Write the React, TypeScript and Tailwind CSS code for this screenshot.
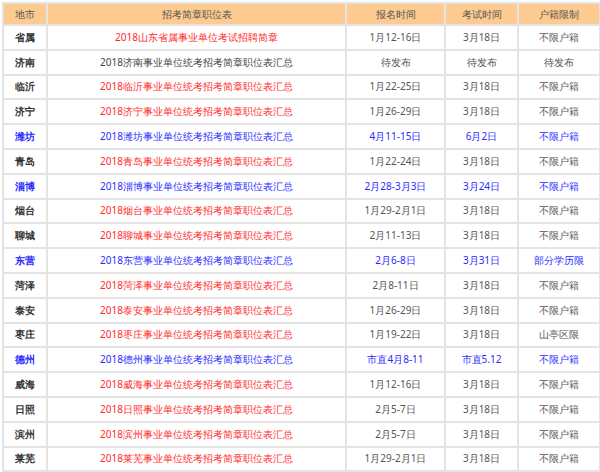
const R = "text-[#ff2a2a]";
const B = "text-[#2a2aff]";

type Row = { city: string; title: string; reg: string; exam: string; hk: string; blue?: boolean };

const rows: Row[] = [
  { city: "省属", title: "2018山东省属事业单位考试招聘简章", reg: "1月12-16日", exam: "3月18日", hk: "不限户籍" },
  { city: "济南", title: "2018济南事业单位统考招考简章职位表汇总", reg: "待发布", exam: "待发布", hk: "待发布" },
  { city: "临沂", title: "2018临沂事业单位统考招考简章职位表汇总", reg: "1月22-25日", exam: "3月18日", hk: "不限户籍" },
  { city: "济宁", title: "2018济宁事业单位统考招考简章职位表汇总", reg: "1月26-29日", exam: "3月18日", hk: "不限户籍" },
  { city: "潍坊", title: "2018潍坊事业单位统考招考简章职位表汇总", reg: "4月11-15日", exam: "6月2日", hk: "不限户籍", blue: true },
  { city: "青岛", title: "2018青岛事业单位统考招考简章职位表汇总", reg: "1月22-24日", exam: "3月18日", hk: "不限户籍" },
  { city: "淄博", title: "2018淄博事业单位统考招考简章职位表汇总", reg: "2月28-3月3日", exam: "3月24日", hk: "不限户籍", blue: true },
  { city: "烟台", title: "2018烟台事业单位统考招考简章职位表汇总", reg: "1月29-2月1日", exam: "3月18日", hk: "不限户籍" },
  { city: "聊城", title: "2018聊城事业单位统考招考简章职位表汇总", reg: "2月11-13日", exam: "3月18日", hk: "不限户籍" },
  { city: "东营", title: "2018东营事业单位统考招考简章职位表汇总", reg: "2月6-8日", exam: "3月31日", hk: "部分学历限", blue: true },
  { city: "菏泽", title: "2018菏泽事业单位统考招考简章职位表汇总", reg: "2月8-11日", exam: "3月18日", hk: "不限户籍" },
  { city: "泰安", title: "2018泰安事业单位统考招考简章职位表汇总", reg: "1月26-29日", exam: "3月18日", hk: "不限户籍" },
  { city: "枣庄", title: "2018枣庄事业单位统考招考简章职位表汇总", reg: "1月19-22日", exam: "3月18日", hk: "山亭区限" },
  { city: "德州", title: "2018德州事业单位统考招考简章职位表汇总", reg: "市直4月8-11", exam: "市直5.12", hk: "不限户籍", blue: true },
  { city: "威海", title: "2018威海事业单位统考招考简章职位表汇总", reg: "1月12-16日", exam: "3月18日", hk: "不限户籍" },
  { city: "日照", title: "2018日照事业单位统考招考简章职位表汇总", reg: "2月5-7日", exam: "3月18日", hk: "不限户籍" },
  { city: "滨州", title: "2018滨州事业单位统考招考简章职位表汇总", reg: "2月5-7日", exam: "3月18日", hk: "不限户籍" },
  { city: "莱芜", title: "2018莱芜事业单位统考招考简章职位表汇总", reg: "1月29-2月1日", exam: "3月18日", hk: "不限户籍" },
];

const cell = "border-2 border-[#e4e4e4] text-center p-0";

export default function App() {
  return (
    <div className="w-[600px] h-[472px] bg-white pt-[2px] pl-[2px] text-[10px] [font-family:'Liberation_Sans','Noto_Sans_CJK_SC',sans-serif]">
      <table className="border-collapse w-[597px] table-fixed">
        <colgroup>
          <col className="w-[44px]" />
          <col className="w-[299px]" />
          <col className="w-[99px]" />
          <col className="w-[73px]" />
          <col className="w-[82px]" />
        </colgroup>
        <thead>
          <tr className="h-[22px] bg-[#fdca8f] text-[#555]">
            <th className={cell + " font-normal"}>地市</th>
            <th className={cell + " font-normal"}>招考简章职位表</th>
            <th className={cell + " font-normal"}>报名时间</th>
            <th className={cell + " font-normal"}>考试时间</th>
            <th className={cell + " font-normal"}>户籍限制</th>
          </tr>
        </thead>
        <tbody>
          {rows.map((r) => (
            <tr key={r.city} className="h-[24.8px]">
              <td className={`${cell} font-semibold ${r.blue ? B : "text-[#333]"}`}>{r.city}</td>
              <td className={`${cell} ${r.blue ? B : r.city === "济南" ? "text-[#444]" : R}`}>{r.title}</td>
              <td className={`${cell} ${r.blue ? B : "text-[#555]"}`}>{r.reg}</td>
              <td className={`${cell} ${r.blue ? B : "text-[#555]"}`}>{r.exam}</td>
              <td className={`${cell} ${r.blue ? B : "text-[#555]"}`}>{r.hk}</td>
            </tr>
          ))}
        </tbody>
      </table>
    </div>
  );
}
